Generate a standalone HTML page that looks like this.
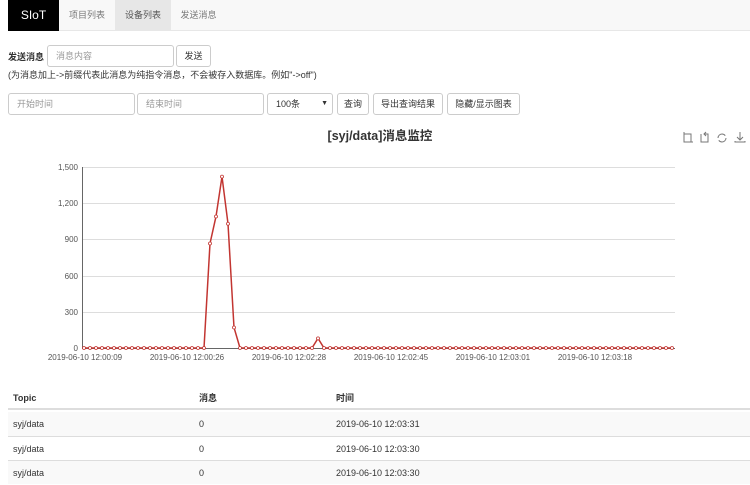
<!DOCTYPE html>
<html><head><meta charset="utf-8"><style>
*{box-sizing:border-box}
body{margin:0;width:750px;height:483px;overflow:hidden;background:#fff;font-family:"Liberation Sans","Noto Sans CJK SC",sans-serif;font-size:9px;color:#333}
.nav{position:absolute;left:8px;top:0;width:750px;height:31px;background:#f8f8f8;border-bottom:1px solid #e7e7e7}
.nav div{position:absolute;top:0;height:31px;line-height:31px;text-align:center;color:#777;font-size:9px}
.abs{position:absolute}
.inp{position:absolute;border:1px solid #ccc;border-radius:3px;height:22px;line-height:20px;padding-left:8px;color:#999;font-size:9px;background:#fff}
.btn{position:absolute;border:1px solid #ccc;border-radius:3px;height:22px;line-height:20px;text-align:center;color:#333;font-size:9px;background:#fff}
.row{position:absolute;left:8px;width:742px;height:24px;line-height:24px;font-size:9px;color:#333}
.row span{position:absolute}
</style></head><body>
<div class="nav">
<div style="left:0;width:51px;background:#000;color:#fff;font-size:12px">SIoT</div>
<div style="left:51px;width:56px">项目列表</div>
<div style="left:107px;width:56px;background:#e7e7e7;color:#555">设备列表</div>
<div style="left:163px;width:55px">发送消息</div>
</div>
<div class="abs" style="left:8px;top:50px;font-weight:bold;font-size:9px">发送消息</div>
<div class="inp" style="left:47px;top:45px;width:127px">消息内容</div>
<div class="btn" style="left:176px;top:45px;width:35px">发送</div>
<div class="abs" style="left:8px;top:68px;font-size:9px">(为消息加上-&gt;前缀代表此消息为纯指令消息，不会被存入数据库。例如"-&gt;off")</div>
<div class="inp" style="left:8px;top:93px;width:127px">开始时间</div>
<div class="inp" style="left:137px;top:93px;width:127px">结束时间</div>
<div class="inp" style="left:267px;top:93px;width:66px;color:#333">100条<span style="position:absolute;right:4px;font-size:7px">▼</span></div>
<div class="btn" style="left:337px;top:93px;width:32px">查询</div>
<div class="btn" style="left:373px;top:93px;width:70px">导出查询结果</div>
<div class="btn" style="left:447px;top:93px;width:73px">隐藏/显示图表</div>
<svg class="abs" style="left:0;top:120px" width="750" height="250" id="ch">
<text x="380" y="20" text-anchor="middle" font-size="12.5" font-weight="bold" fill="#333" font-family="Liberation Sans,Noto Sans CJK SC,sans-serif">[syj/data]消息监控</text>
<g fill="none" stroke="#777" stroke-width="1">
<path d="M684 12v10h9M684 14h7v8"/><path d="M701 14v8h7v-8h-4M706 12l-2 2 2 2"/>
<circle cx="722" cy="18" r="4" stroke-dasharray="10 2.5"/><path d="M740 12v8M737 17l3 3 3-3M735 21v1h10v-1"/>
</g>
<g stroke="#ddd" stroke-width="1">
<line x1="82" x2="675" y1="47.5" y2="47.5"/><line x1="82" x2="675" y1="83.5" y2="83.5"/><line x1="82" x2="675" y1="119.5" y2="119.5"/><line x1="82" x2="675" y1="156.5" y2="156.5"/><line x1="82" x2="675" y1="192.5" y2="192.5"/>
</g>
<line x1="82.5" x2="82.5" y1="47" y2="229" stroke="#666"/>
<line x1="82" x2="675" y1="228.5" y2="228.5" stroke="#666"/>
<g font-size="8" fill="#555" text-anchor="end" font-family="Liberation Sans,sans-serif">
<text x="78" y="50">1,500</text><text x="78" y="86">1,200</text><text x="78" y="122">900</text><text x="78" y="159">600</text><text x="78" y="195">300</text><text x="78" y="231">0</text>
</g>
<g font-size="8" fill="#555" text-anchor="middle" font-family="Liberation Sans,sans-serif">
<text x="85" y="240">2019-06-10 12:00:09</text><text x="187" y="240">2019-06-10 12:00:26</text><text x="289" y="240">2019-06-10 12:02:28</text><text x="391" y="240">2019-06-10 12:02:45</text><text x="493" y="240">2019-06-10 12:03:01</text><text x="595" y="240">2019-06-10 12:03:18</text>
</g>
<g id="ser"></g>
</svg>
<div class="row" style="top:386px;font-weight:bold;border-bottom:2px solid #ddd"><span style="left:5px">Topic</span><span style="left:191px">消息</span><span style="left:328px">时间</span></div>
<div class="row" style="top:412px;background:#f9f9f9"><span style="left:5px">syj/data</span><span style="left:191px">0</span><span style="left:328px">2019-06-10 12:03:31</span></div>
<div class="row" style="top:436px;border-top:1px solid #ddd"><span style="left:5px">syj/data</span><span style="left:191px">0</span><span style="left:328px">2019-06-10 12:03:30</span></div>
<div class="row" style="top:460px;background:#f9f9f9;border-top:1px solid #ddd"><span style="left:5px">syj/data</span><span style="left:191px">0</span><span style="left:328px">2019-06-10 12:03:30</span></div>
<script>
var v={21:866,22:1090,23:1420,24:1030,25:170,39:80};
var g=document.getElementById('ser'),pts=[],c='';
for(var i=0;i<99;i++){var x=84+i*6,y=228-(v[i]||0)*181/1500;pts.push(x+','+y);c+='<circle cx="'+x+'" cy="'+y+'" r="1.5" fill="#fff" stroke="#c23531" stroke-width="0.8"/>';}
g.innerHTML='<polyline fill="none" stroke="#c23531" stroke-width="1.5" points="'+pts.join(' ')+'"/>'+c;
</script>
</body></html>
